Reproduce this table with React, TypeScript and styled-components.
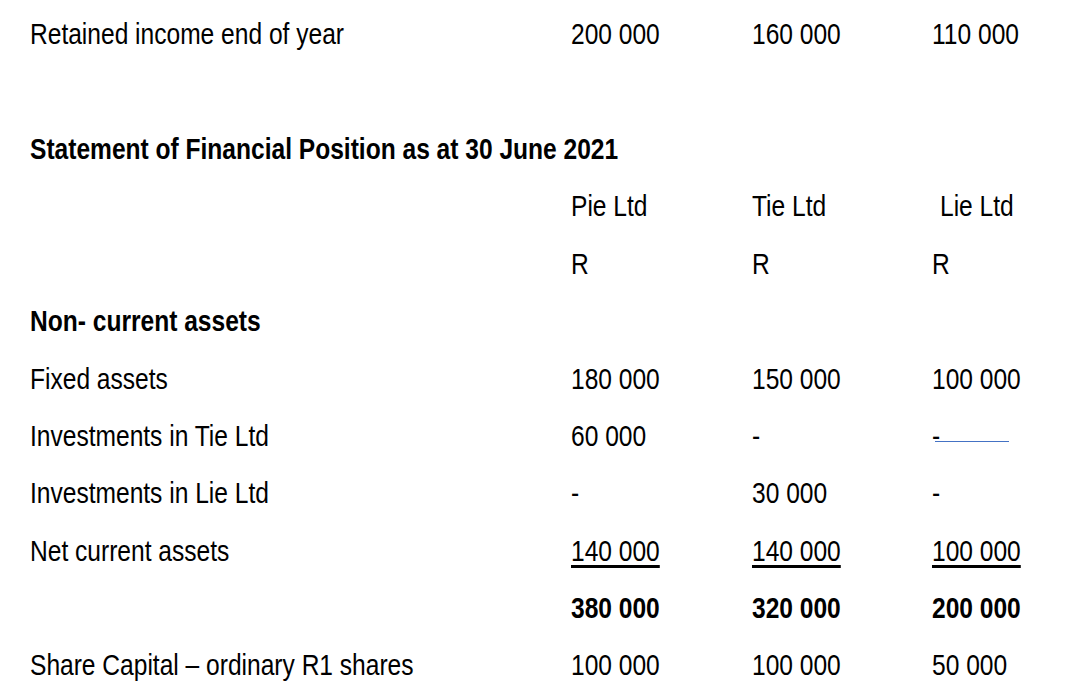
import React from "react";
import styled, { createGlobalStyle } from "styled-components";

const Global = createGlobalStyle`
  html, body { margin: 0; padding: 0; background: #ffffff; }
  body {
    font-family: "Liberation Sans", Arial, sans-serif;
    color: #000000;
  }
`;

const Page = styled.div`
  width: 1070px;
  height: 693px;
  overflow: hidden;
  box-sizing: border-box;
  padding: 6px 0 0 30px;
`;

const Row = styled.div`
  display: grid;
  grid-template-columns: 541px 181px 180px 1fr;
  height: 57.4px;
  align-items: center;
  font-size: 28.7px;
`;

const Spacer = styled.div`
  height: 57.4px;
`;

const Cell = styled.div<{ $bold?: boolean; $shift?: number; $rule?: boolean }>`
  position: relative;
  font-weight: ${(p) => (p.$bold ? 700 : 400)};
  white-space: nowrap;
  padding-left: ${(p) => p.$shift ?? 0}px;
  ${(p) =>
    p.$rule
      ? `&::after {
    content: "";
    position: absolute;
    left: 3px;
    top: 21px;
    width: 74px;
    height: 1px;
    background: #4472c4;
  }`
      : ""}
`;

const Text = styled.span<{ $underline?: boolean }>`
  display: inline-block;
  transform: scaleX(0.856);
  transform-origin: left center;
  text-decoration: ${(p) => (p.$underline ? "underline" : "none")};
  text-decoration-thickness: 3px;
  text-underline-offset: 4px;
`;

export default function App() {
  return (
    <>
      <Global />
      <Page>
        <Row>
          <Cell>
            <Text>Retained income end of year</Text>
          </Cell>
          <Cell>
            <Text>200 000</Text>
          </Cell>
          <Cell>
            <Text>160 000</Text>
          </Cell>
          <Cell>
            <Text>110 000</Text>
          </Cell>
        </Row>
        <Spacer />
        <Row>
          <Cell $bold>
            <Text>Statement of Financial Position as at 30 June 2021</Text>
          </Cell>
        </Row>
        <Row>
          <Cell />
          <Cell>
            <Text>Pie Ltd</Text>
          </Cell>
          <Cell>
            <Text>Tie Ltd</Text>
          </Cell>
          <Cell $shift={8}>
            <Text>Lie Ltd</Text>
          </Cell>
        </Row>
        <Row>
          <Cell />
          <Cell>
            <Text>R</Text>
          </Cell>
          <Cell>
            <Text>R</Text>
          </Cell>
          <Cell>
            <Text>R</Text>
          </Cell>
        </Row>
        <Row>
          <Cell $bold>
            <Text>Non- current assets</Text>
          </Cell>
        </Row>
        <Row>
          <Cell>
            <Text>Fixed assets</Text>
          </Cell>
          <Cell>
            <Text>180 000</Text>
          </Cell>
          <Cell>
            <Text>150 000</Text>
          </Cell>
          <Cell>
            <Text>100 000</Text>
          </Cell>
        </Row>
        <Row>
          <Cell>
            <Text>Investments in Tie Ltd</Text>
          </Cell>
          <Cell>
            <Text>60 000</Text>
          </Cell>
          <Cell>
            <Text>-</Text>
          </Cell>
          <Cell $rule>
            <Text>-</Text>
          </Cell>
        </Row>
        <Row>
          <Cell>
            <Text>Investments in Lie Ltd</Text>
          </Cell>
          <Cell>
            <Text>-</Text>
          </Cell>
          <Cell>
            <Text>30 000</Text>
          </Cell>
          <Cell>
            <Text>-</Text>
          </Cell>
        </Row>
        <Row>
          <Cell>
            <Text>Net current assets</Text>
          </Cell>
          <Cell>
            <Text $underline>140 000</Text>
          </Cell>
          <Cell>
            <Text $underline>140 000</Text>
          </Cell>
          <Cell>
            <Text $underline>100 000</Text>
          </Cell>
        </Row>
        <Row>
          <Cell />
          <Cell $bold>
            <Text>380 000</Text>
          </Cell>
          <Cell $bold>
            <Text>320 000</Text>
          </Cell>
          <Cell $bold>
            <Text>200 000</Text>
          </Cell>
        </Row>
        <Row>
          <Cell>
            <Text>Share Capital – ordinary R1 shares</Text>
          </Cell>
          <Cell>
            <Text>100 000</Text>
          </Cell>
          <Cell>
            <Text>100 000</Text>
          </Cell>
          <Cell>
            <Text>50 000</Text>
          </Cell>
        </Row>
      </Page>
    </>
  );
}
